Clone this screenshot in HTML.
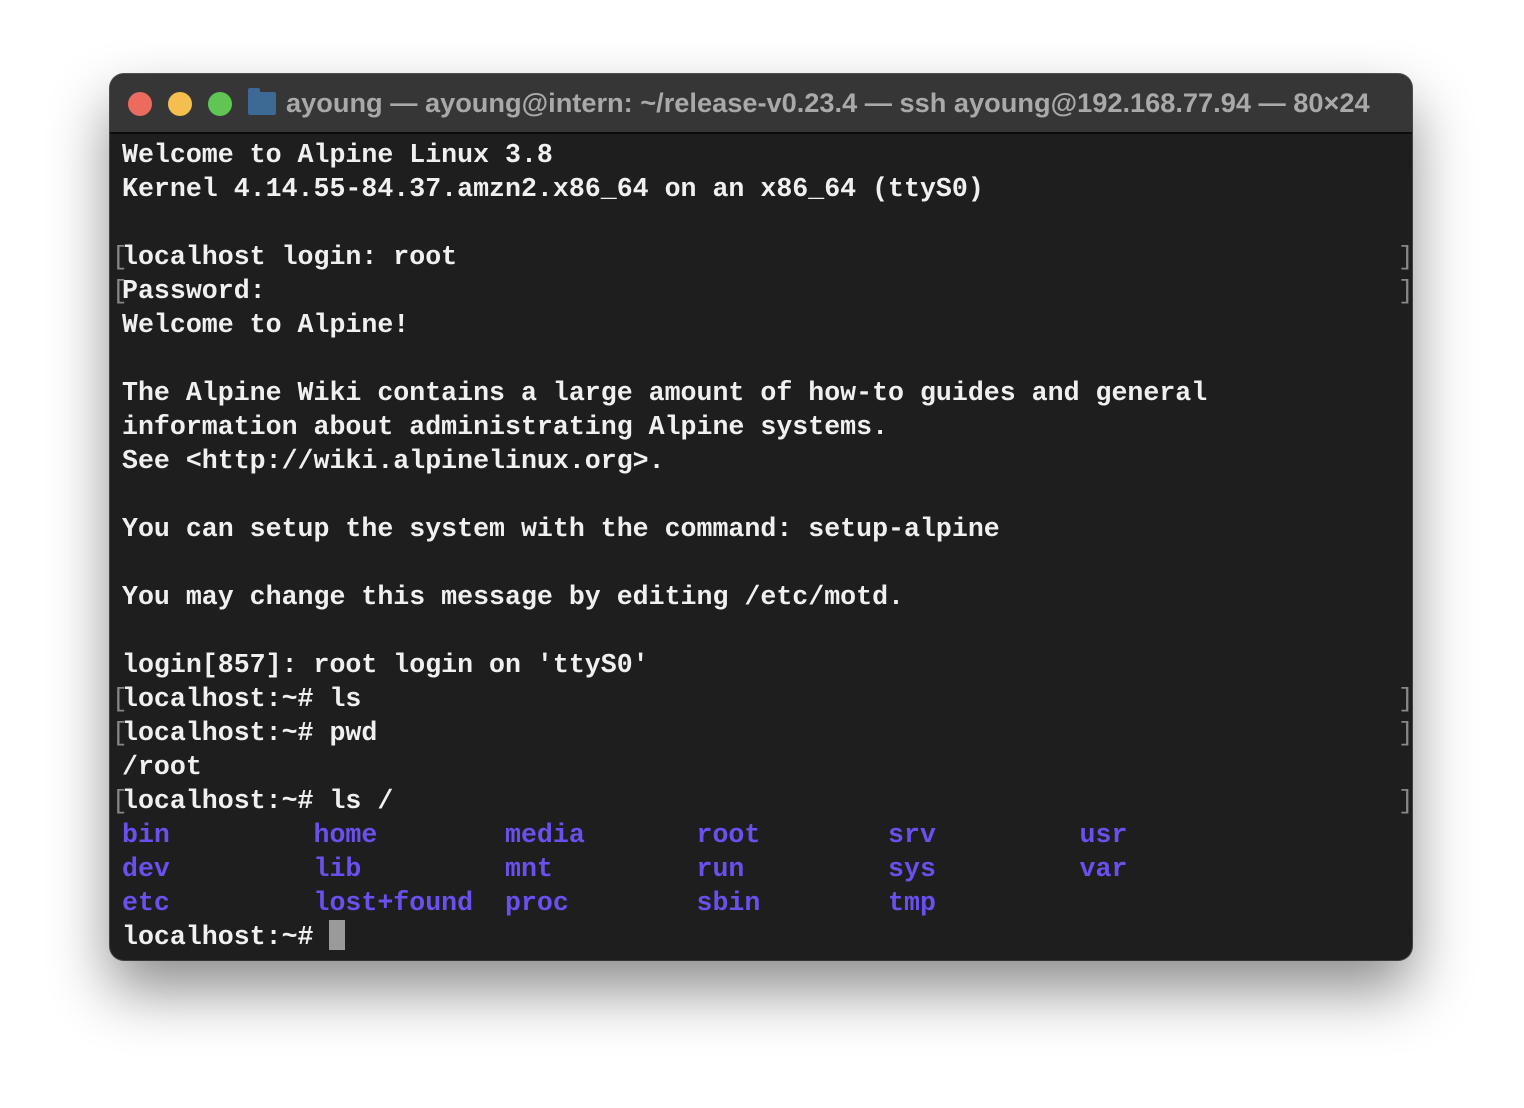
<!DOCTYPE html>
<html><head><meta charset="utf-8"><style>
html,body{margin:0;width:1524px;height:1108px;background:#fff;overflow:hidden}
.win{position:absolute;left:110px;top:74px;width:1302px;height:886px;border-radius:14px;background:#1e1e1e;box-shadow:0 30px 60px rgba(0,0,0,.45),0 0 0 1px #555;overflow:hidden}
.tb{position:absolute;left:0;top:0;width:100%;height:58px;background:#363636;border-bottom:2px solid #0c0c0c}
.dot{position:absolute;top:18px;width:24px;height:24px;border-radius:50%}
.title{position:absolute;left:176px;top:13px;font:bold 27.2px "Liberation Sans",sans-serif;color:#a9a9a9;white-space:nowrap}
.folder{position:absolute;left:138px;top:18px;width:28px;height:23px;background:#3c6a94;border-radius:2px}
.folder:before{content:"";position:absolute;left:0;top:-4px;width:12px;height:5px;background:#3c6a94;border-radius:2px 2px 0 0}
pre{position:absolute;left:12px;top:64px;margin:0;font:bold 26.6px/34px "Liberation Mono",monospace;color:#f0f0f0}
.p{color:#6a50ee}
.cur{display:inline-block;width:16px;height:30px;background:#9a9a9a;vertical-align:-6px}
.br{position:absolute;color:#888;font:26px/34px "Liberation Mono",monospace}
</style></head><body>
<div class="win">
<div class="tb">
<div class="dot" style="left:18px;background:#ed6a5e"></div>
<div class="dot" style="left:58px;background:#f5bf4f"></div>
<div class="dot" style="left:98px;background:#61c554"></div>
<div class="folder"></div>
<div class="title">ayoung — ayoung@intern: ~/release-v0.23.4 — ssh ayoung@192.168.77.94 — 80×24</div>
</div>
<pre>Welcome to Alpine Linux 3.8
Kernel 4.14.55-84.37.amzn2.x86_64 on an x86_64 (ttyS0)

localhost login: root
Password:
Welcome to Alpine!

The Alpine Wiki contains a large amount of how-to guides and general
information about administrating Alpine systems.
See &lt;http://wiki.alpinelinux.org&gt;.

You can setup the system with the command: setup-alpine

You may change this message by editing /etc/motd.

login[857]: root login on 'ttyS0'
localhost:~# ls
localhost:~# pwd
/root
localhost:~# ls /
<span class="p">bin         home        media       root        srv         usr
dev         lib         mnt         run         sys         var
etc         lost+found  proc        sbin        tmp</span>
localhost:~# <span class="cur"></span></pre>
<div class="br" style="left:2px;top:166px">[</div><div class="br" style="left:1288px;top:166px">]</div>
<div class="br" style="left:2px;top:200px">[</div><div class="br" style="left:1288px;top:200px">]</div>
<div class="br" style="left:2px;top:608px">[</div><div class="br" style="left:1288px;top:608px">]</div>
<div class="br" style="left:2px;top:642px">[</div><div class="br" style="left:1288px;top:642px">]</div>
<div class="br" style="left:2px;top:710px">[</div><div class="br" style="left:1288px;top:710px">]</div>
</div>
</body></html>
